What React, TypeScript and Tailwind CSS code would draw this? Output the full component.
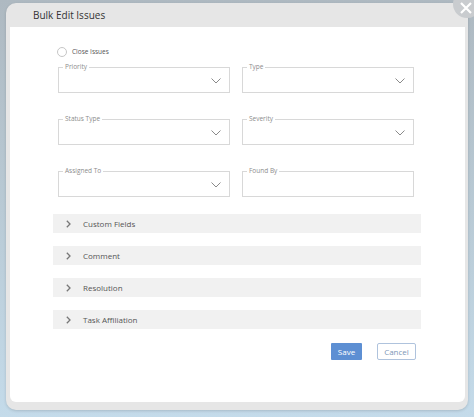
import React from 'react';

const ChevronDown: React.FC = () => (
  <svg width="10" height="6" viewBox="0 0 10 6" className="absolute right-[8px] top-[10px]">
    <path d="M0.5 0.5 L5 5 L9.5 0.5" fill="none" stroke="#8a8a8a" strokeWidth="1" />
  </svg>
);

const ChevronRight: React.FC = () => (
  <svg width="5" height="8" viewBox="0 0 5 8">
    <path d="M0.8 0.8 L4 4 L0.8 7.2" fill="none" stroke="#777" strokeWidth="1.3" />
  </svg>
);

const Field: React.FC<{ label: string; select?: boolean }> = ({ label, select = true }) => (
  <div className="relative w-[172px] h-[26px] border border-[#d8d8d8] bg-white">
    <span className="absolute left-[4px] top-[-6px] bg-white px-[2px] text-[6.5px] leading-[10px] text-[#8c8c8c]">
      {label}
    </span>
    {select && <ChevronDown />}
  </div>
);

const Section: React.FC<{ title: string }> = ({ title }) => (
  <div className="flex items-center h-[19px] bg-[#f1f1f1] pl-[13px]">
    <ChevronRight />
    <span className="ml-[12px] text-[8px] font-normal text-[#555]">{title}</span>
  </div>
);

const App: React.FC = () => {
  return (
    <div
      className="relative w-[474px] h-[417px] overflow-hidden bg-gradient-to-b from-[#aeb9c1] via-[#b9cad5] to-[#c4dbea] pt-[3px] pl-[6px]"
      style={{ fontFamily: '"Open Sans", "Noto Sans", sans-serif' }}
    >
      <div className="w-[462px] h-[407px] rounded-[10px] bg-[#e6e6e6] flex flex-col pl-[4px] pr-[3px] pb-[8px] shadow-[0_1px_3px_rgba(0,0,0,0.15)]">
        <div className="h-[24px] flex items-center pl-[23px] text-[10px] text-[#333]">Bulk Edit Issues</div>
        <div className="flex-1 bg-white rounded-b-[6px] flex flex-col">
          <div className="flex items-center mt-[20px] ml-[47px] h-[10px]">
            <span className="w-[10px] h-[10px] rounded-full border border-[#c6c6c6] bg-white" />
            <span className="ml-[5px] text-[6.5px] text-[#555]">Close Issues</span>
          </div>
          <div className="ml-[48px] mt-[10px] grid grid-cols-[172px_172px] gap-x-[12px] gap-y-[26px]">
            <Field label="Priority" />
            <Field label="Type" />
            <Field label="Status Type" />
            <Field label="Severity" />
            <Field label="Assigned To" />
            <Field label="Found By" select={false} />
          </div>
          <div className="ml-[43px] w-[368px] mt-[17px] flex flex-col gap-[13px]">
            <Section title="Custom Fields" />
            <Section title="Comment" />
            <Section title="Resolution" />
            <Section title="Task Affiliation" />
          </div>
          <div className="flex justify-end gap-[15px] mr-[49px] mt-[14px]">
            <button className="w-[31px] h-[17px] bg-[#5d8fd3] text-white text-[8px] rounded-[1px]">Save</button>
            <button className="w-[39px] h-[17px] bg-white border border-[#afc3dd] text-[#7d97b7] text-[8px] rounded-[2px]">
              Cancel
            </button>
          </div>
        </div>
      </div>
      <div className="absolute left-[453px] top-[-10px] w-[28px] h-[28px] rounded-full bg-[#c9cccf] flex items-center justify-center">
        <svg width="14" height="14" viewBox="0 0 14 14" className="mt-[7px] mr-[3px]">
          <path d="M2 2 L12 12 M12 2 L2 12" stroke="#fff" strokeWidth="2.2" />
        </svg>
      </div>
    </div>
  );
};

export default App;
